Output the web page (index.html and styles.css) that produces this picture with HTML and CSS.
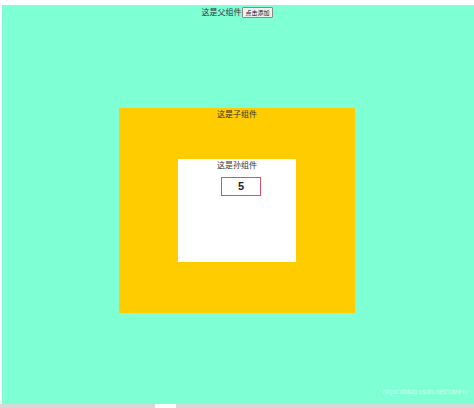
FILE: index.html
```html
<!DOCTYPE html>
<html>
<head>
<meta charset="utf-8">
<link rel="stylesheet" href="styles.css">
</head>
<body>
<div class="page">
  <div class="parent">
    <div class="parent-head"><span class="label">这是父组件</span><button class="btn">点击添加</button></div>
    <div class="child">
      <div class="label child-label">这是子组件</div>
      <div class="grand">
        <div class="label">这是孙组件</div>
        <div class="num">5</div>
      </div>
    </div>
    <div class="watermark">https://blog.csdn.net/YanHu</div>
  </div>
  <div class="bottom"><span class="tab"></span></div>
</div>
</body>
</html>
```
FILE: styles.css
```css
html, body {
  margin: 0;
  padding: 0;
  background: #ffffff;
  width: 474px;
  height: 408px;
  overflow: hidden;
}
.page {
  display: flex;
  flex-direction: column;
  padding-top: 5px;
  height: 403px;
}
.parent {
  position: relative;
  margin-left: 2px;
  height: 399px;
  background: #7fffd4;
  display: flex;
  flex-direction: column;
  align-items: center;
  font-family: "Noto Sans CJK SC", "Liberation Sans", sans-serif;
  color: #333;
}
.parent-head {
  display: flex;
  align-items: center;
  height: 12px;
  margin-top: 1px;
  margin-left: -2px;
}
.label {
  font-size: 8px;
  line-height: 10px;
}
.btn {
  margin: 0 0 0 1px;
  padding: 0 2px;
  height: 11px;
  font-size: 6px;
  line-height: 9px;
  font-family: "Noto Sans CJK SC", sans-serif;
  background: #f0f0f0;
  border: 1px solid #8a8a8a;
  border-radius: 1px;
  color: #111;
}
.child {
  margin-top: 90px;
  margin-left: -2px;
  width: 236px;
  height: 205px;
  background: #ffcc00;
  display: flex;
  flex-direction: column;
  align-items: center;
}
.child-label {
  margin-top: 1px;
}
.grand {
  margin-top: 40px;
  width: 118px;
  height: 103px;
  background: #ffffff;
  display: flex;
  flex-direction: column;
  align-items: center;
}
.grand .label {
  margin-top: 1px;
}
.num {
  margin-top: 7px;
  margin-left: 8px;
  width: 38px;
  height: 17px;
  border: 1.5px solid #e05060;
  font-family: "Liberation Sans", sans-serif;
  font-weight: bold;
  font-size: 11px;
  line-height: 16px;
  text-align: center;
  color: #222;
}
.watermark {
  position: absolute;
  right: 6px;
  bottom: 9px;
  font-family: "Liberation Sans", sans-serif;
  font-size: 7px;
  color: rgba(255,255,255,0.55);
}
.bottom {
  height: 4px;
  background: #d8d8d8;
  position: relative;
}
.tab {
  position: absolute;
  left: 155px;
  top: 0;
  width: 21px;
  height: 4px;
  background: #fafafa;
}
```
